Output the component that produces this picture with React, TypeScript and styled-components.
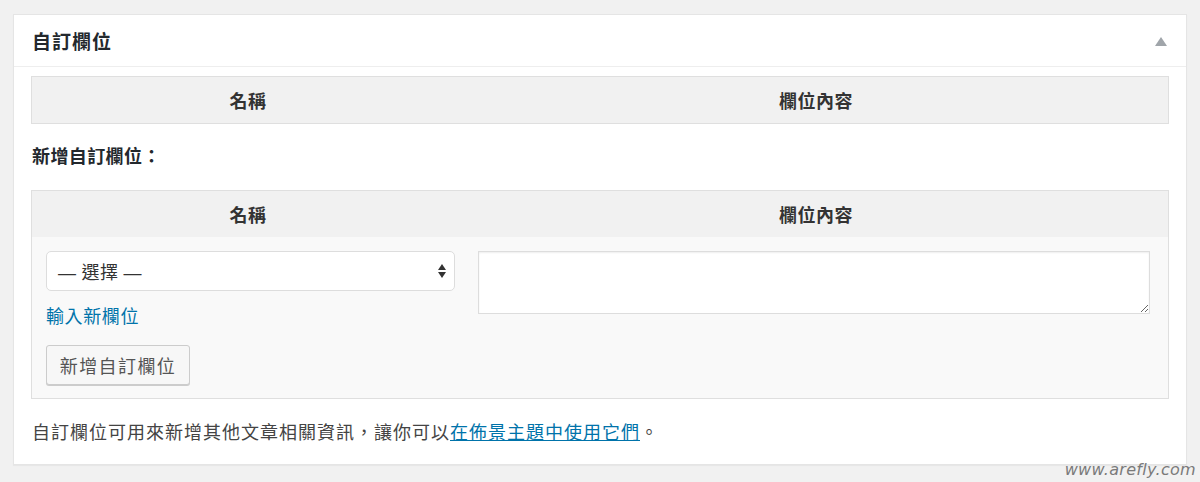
import React from "react";
import styled, { createGlobalStyle } from "styled-components";

const GlobalStyle = createGlobalStyle`
  html, body {
    margin: 0;
    padding: 0;
    background: #f1f1f1;
    font-family: "Noto Sans CJK TC", "Noto Sans", "Liberation Sans", sans-serif;
    color: #444;
  }
`;

const Page = styled.div`
  position: relative;
  width: 1200px;
  height: 482px;
  padding: 14px 13px 0;
  box-sizing: border-box;
`;

const Postbox = styled.div`
  background: #fff;
  border: 1px solid #e5e5e5;
  box-shadow: 0 1px 1px rgba(0, 0, 0, 0.04);
`;

const PostboxHeader = styled.div`
  display: flex;
  align-items: center;
  justify-content: space-between;
  height: 51px;
  padding: 0 19px 0 18px;
  border-bottom: 1px solid #eee;
`;

const Title = styled.h2`
  margin: 0;
  font-size: 19px;
  font-weight: 700;
  color: #23282d;
  letter-spacing: 1px;
`;

const Toggle = styled.span`
  width: 0;
  height: 0;
  border-left: 6px solid transparent;
  border-right: 6px solid transparent;
  border-bottom: 9px solid #a0a5aa;
  margin-top: 2px;
`;

const Inside = styled.div`
  padding: 9px 17px 0;
`;

const Table = styled.div`
  border: 1px solid #dfdfdf;
  background: #f9f9f9;
`;

const Row = styled.div`
  display: grid;
  grid-template-columns: 432px 1fr;
`;

const HeadRow = styled(Row)`
  background: #f1f1f1;
  height: ${(p: { $h: number }) => p.$h}px;
  align-items: center;
`;

const HeadCell = styled.div`
  text-align: center;
  font-size: 18px;
  font-weight: 700;
  color: #333;
  letter-spacing: 0.5px;
`;

const Cell = styled.div`
  display: flex;
  flex-direction: column;
  align-items: flex-start;
`;

const LeftCell = styled(Cell)`
  padding: 14px 0 13px 14px;
`;

const RightCell = styled(Cell)`
  padding: 14px 18px 0 14px;
  align-items: stretch;
`;

const Subtitle = styled.div`
  margin: 19px 0 23px 1px;
  line-height: 24px;
  font-size: 18px;
  font-weight: 700;
  color: #23282d;
  letter-spacing: 0.4px;
`;

const SelectBox = styled.div`
  position: relative;
  width: 409px;
  height: 40px;
  box-sizing: border-box;
  background: #fff;
  border: 1px solid #ddd;
  border-radius: 5px;
  display: flex;
  align-items: center;
  padding-left: 11px;
  font-family: "Liberation Sans", "Noto Sans CJK TC", sans-serif;
  font-size: 18px;
  color: #333;
  letter-spacing: 0.3px;
  white-space: pre;
`;

const Arrows = styled.span`
  position: absolute;
  right: 8px;
  top: 12px;
  display: flex;
  flex-direction: column;
  gap: 2px;
`;

const ArrowUp = styled.span`
  width: 0;
  height: 0;
  border-left: 4px solid transparent;
  border-right: 4px solid transparent;
  border-bottom: 6px solid #333;
`;

const ArrowDown = styled(ArrowUp)`
  border-bottom: none;
  border-top: 6px solid #333;
`;

const NewLink = styled.a`
  margin-top: 12px;
  line-height: 24px;
  font-size: 18px;
  color: #0073aa;
  text-decoration: none;
  letter-spacing: 0.6px;
`;

const Button = styled.button`
  margin-top: 18px;
  width: 144px;
  height: 40px;
  padding: 0;
  background: #f7f7f7;
  border: 1px solid #ccc;
  border-radius: 3px;
  box-shadow: 0 1px 0 #ccc;
  font-family: inherit;
  font-size: 18px;
  color: #555;
  letter-spacing: 1.4px;
`;

const TextArea = styled.textarea`
  height: 63px;
  box-sizing: border-box;
  border: 1px solid #ddd;
  box-shadow: inset 0 1px 2px rgba(0, 0, 0, 0.07);
  background: #fff;
  resize: vertical;
  font-family: inherit;
  margin: 0;
`;

const Note = styled.p`
  margin: 0;
  padding: 20px 1px 21px;
  line-height: 24px;
  font-size: 18px;
  color: #444;
  letter-spacing: 1px;
  a {
    color: #0073aa;
    text-decoration: underline;
  }
`;

const Watermark = styled.div`
  position: absolute;
  right: 4px;
  bottom: 3px;
  font-family: "DejaVu Sans", sans-serif;
  font-style: italic;
  font-size: 16px;
  color: #7a7a7a;
  letter-spacing: 0.3px;
`;

export default function App() {
  return (
    <Page>
      <GlobalStyle />
      <Postbox>
        <PostboxHeader>
          <Title>自訂欄位</Title>
          <Toggle />
        </PostboxHeader>
        <Inside>
          <Table>
            <HeadRow $h={46}>
              <HeadCell>名稱</HeadCell>
              <HeadCell>欄位內容</HeadCell>
            </HeadRow>
          </Table>
          <Subtitle>新增自訂欄位：</Subtitle>
          <Table>
            <HeadRow $h={46}>
              <HeadCell>名稱</HeadCell>
              <HeadCell>欄位內容</HeadCell>
            </HeadRow>
            <Row>
              <LeftCell>
                <SelectBox>
                  {"— 選擇 —"}
                  <Arrows>
                    <ArrowUp />
                    <ArrowDown />
                  </Arrows>
                </SelectBox>
                <NewLink href="#">輸入新欄位</NewLink>
                <Button>新增自訂欄位</Button>
              </LeftCell>
              <RightCell>
                <TextArea />
              </RightCell>
            </Row>
          </Table>
          <Note>
            自訂欄位可用來新增其他文章相關資訊，讓你可以
            <a href="#">在佈景主題中使用它們</a>。
          </Note>
        </Inside>
      </Postbox>
      <Watermark>www.arefly.com</Watermark>
    </Page>
  );
}
